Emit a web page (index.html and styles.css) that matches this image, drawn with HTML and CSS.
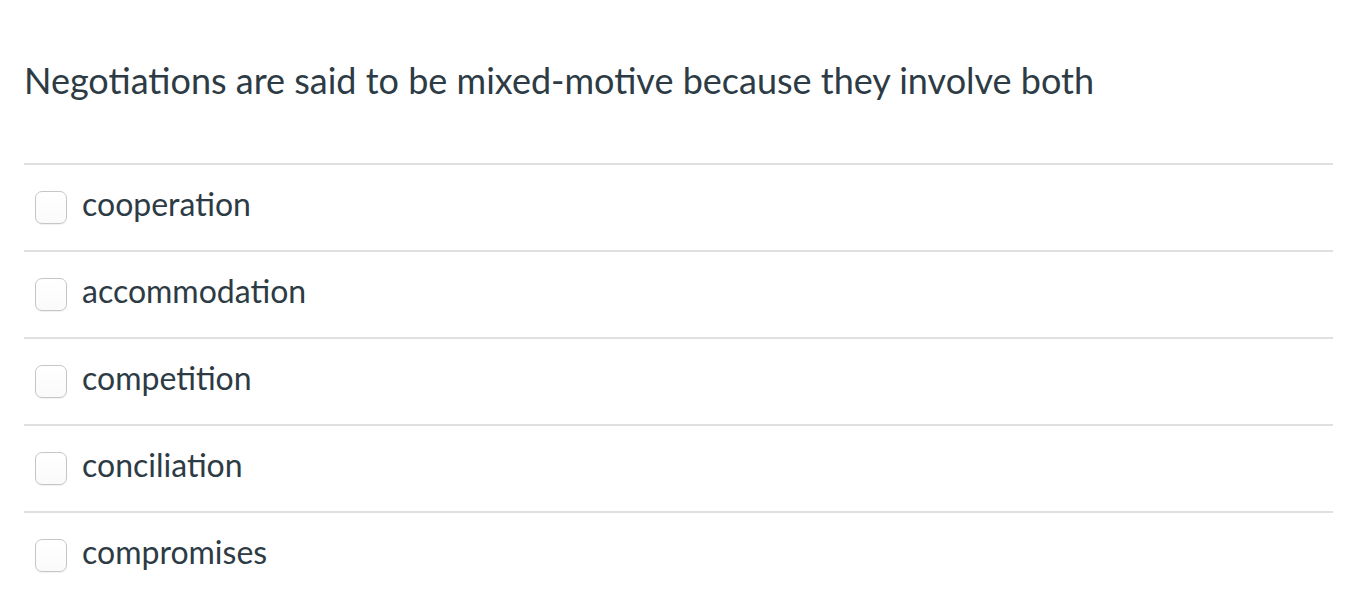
FILE: index.html
```html
<!DOCTYPE html>
<html lang="en">
<head>
<meta charset="utf-8">
<title>Quiz question</title>
<link rel="stylesheet" href="styles.css">
</head>
<body>
<div class="quiz">
  <div class="question">Negotiations are said to be mixed-motive because they involve both</div>
  <ul class="answers">
    <li class="answer"><span class="box"></span><span class="label">cooperation</span></li>
    <li class="answer"><span class="box"></span><span class="label">accommodation</span></li>
    <li class="answer"><span class="box"></span><span class="label">competition</span></li>
    <li class="answer"><span class="box"></span><span class="label">conciliation</span></li>
    <li class="answer"><span class="box"></span><span class="label">compromises</span></li>
  </ul>
</div>
</body>
</html>
```

FILE: styles.css
```css
html, body {
  margin: 0;
  padding: 0;
  background: #ffffff;
}
body {
  font-family: Lato, "Noto Sans", sans-serif;
  color: #2d3b45;
}
.quiz {
  padding: 0 29px 0 24px;
}
.question {
  font-size: 36px;
  line-height: 44px;
  padding-top: 58px;
  padding-bottom: 61px;
}
.answers {
  list-style: none;
  margin: 0;
  padding: 0;
}
.answer {
  display: flex;
  align-items: center;
  height: 85px;
  border-top: 2px solid #e0e0e0;
  padding-left: 11px;
}
.box {
  width: 30px;
  height: 31px;
  border: 1px solid #c6c6c6;
  border-radius: 7px;
  background: linear-gradient(#ffffff, #fafafa);
  box-shadow: 0 1px 1px rgba(0,0,0,0.06);
  flex: none;
  margin-right: 15px;
  margin-top: 0;
}
.label {
  font-size: 32px;
  line-height: 36px;
  margin-top: -7px;
}
```
